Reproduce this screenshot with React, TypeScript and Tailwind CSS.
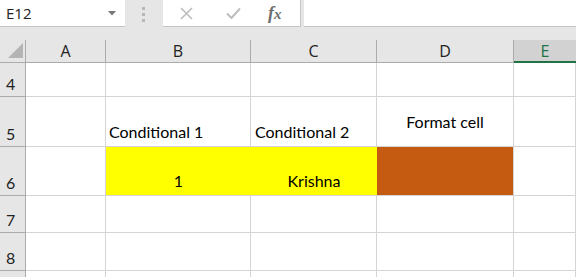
import React from "react";

const cell = "border-r border-b border-[#d4d4d4] bg-white";
const font = { fontFamily: "Lato, 'Liberation Sans', sans-serif" };

function RowHead({ n, h }: { n?: number; h: string }) {
  return (
    <div
      className={`${h} bg-[#e6e6e6] border-r border-b border-[#ababab] flex items-end pl-[6px] pb-[2px] text-[16px] leading-[20px] text-[#222]`}
    >
      {n}
    </div>
  );
}

export default function App() {
  return (
    <div className="w-[576px] h-[277px] overflow-hidden bg-[#e6e6e6]" style={font}>
      {/* toolbar */}
      <div className="flex h-[28px]">
        <div className="w-[125px] h-[27px] bg-white border-b border-[#c6c6c6] flex items-center justify-between pl-[6px] pr-[9px]">
          <span className="text-[15px] text-[#222]" style={{ fontFamily: "'Open Sans', sans-serif" }}>E12</span>
          <svg width="8" height="5" viewBox="0 0 8 5"><path d="M0 0h8L4 4.5z" fill="#777" /></svg>
        </div>
        <div className="w-[38px] flex flex-col items-center justify-center gap-[3px] pr-[2px]">
          <span className="w-[3px] h-[3px] bg-[#b8b8b8]" />
          <span className="w-[3px] h-[3px] bg-[#b8b8b8]" />
          <span className="w-[3px] h-[3px] bg-[#b8b8b8]" />
        </div>
        <div className="w-[138px] h-[27px] bg-white border-b border-r border-[#c6c6c6] flex items-center">
          <svg className="ml-[17px]" width="13" height="13" viewBox="0 0 13 13">
            <path d="M1 1L12 12M12 1L1 12" stroke="#bdbdbd" strokeWidth="1.6" fill="none" />
          </svg>
          <svg className="ml-[33px]" width="15" height="12" viewBox="0 0 15 12">
            <path d="M1 6.5L5.5 11L14 1.5" stroke="#bdbdbd" strokeWidth="2" fill="none" />
          </svg>
          <span
            className="ml-[27px] text-[18px] italic font-bold text-[#6e6e6e] leading-none"
            style={{ fontFamily: "'Liberation Serif', serif" }}
          >
            f<span className="text-[15px]">x</span>
          </span>
        </div>
        <div className="w-[3px]" />
        <div className="flex-1 h-[27px] bg-white border-b border-[#c6c6c6]" />
      </div>
      <div className="h-[12px]" />

      {/* grid */}
      <div className="grid grid-cols-[26px_80px_145px_126px_137px_1fr] text-[16px] text-black">
        {/* header */}
        <div className="h-[23px] bg-[#e6e6e6] border-r border-b border-[#ababab] relative">
          <svg className="absolute left-[8px] top-[3px]" width="15" height="15" viewBox="0 0 15 15">
            <path d="M15 0V15H0z" fill="#b4b4b4" />
          </svg>
        </div>
        {["A", "B", "C", "D"].map((c) => (
          <div
            key={c}
            className="h-[23px] bg-[#e6e6e6] border-r border-b border-[#ababab] flex items-center justify-center text-[16px] text-[#222]"
            style={{ fontFamily: "'Open Sans', sans-serif" }}
          >
            {c}
          </div>
        ))}
        <div
          className="h-[23px] bg-[#d2d2d2] border-b-2 border-[#217346] flex items-center justify-center text-[16px] text-[#217346]"
          style={{ fontFamily: "'Open Sans', sans-serif" }}
        >
          E
        </div>

        {/* row 4 */}
        <RowHead n={4} h="h-[34px]" />
        <div className={cell} />
        <div className={cell} />
        <div className={cell} />
        <div className={cell} />
        <div className={cell} />

        {/* row 5 */}
        <RowHead n={5} h="h-[50px]" />
        <div className={cell} />
        <div className={`${cell} flex items-end pl-[3px] pb-[2px]`}>Conditional 1</div>
        <div className={`${cell} flex items-end pl-[4px] pb-[2px]`}>Conditional 2</div>
        <div className={`${cell} flex items-center justify-center pt-[1px]`}>Format cell</div>
        <div className={cell} />

        {/* row 6 */}
        <RowHead n={6} h="h-[49px]" />
        <div className={cell} />
        <div className="bg-[#ffff00] border-b border-[#d4d4d4] flex items-end justify-center pb-[2px]">1</div>
        <div className="bg-[#ffff00] border-b border-[#d4d4d4] flex items-end justify-center pb-[2px]">Krishna</div>
        <div className="bg-[#c55a11] border-r border-b border-[#d4d4d4]" />
        <div className={cell} />

        {/* row 7 */}
        <RowHead n={7} h="h-[37px]" />
        <div className={cell} />
        <div className={cell} />
        <div className={cell} />
        <div className={cell} />
        <div className={cell} />

        {/* row 8 */}
        <RowHead n={8} h="h-[38px]" />
        <div className={cell} />
        <div className={cell} />
        <div className={cell} />
        <div className={cell} />
        <div className={cell} />

        {/* row 9 */}
        <RowHead h="h-[30px]" />
        <div className={cell} />
        <div className={cell} />
        <div className={cell} />
        <div className={cell} />
        <div className={cell} />
      </div>
    </div>
  );
}
